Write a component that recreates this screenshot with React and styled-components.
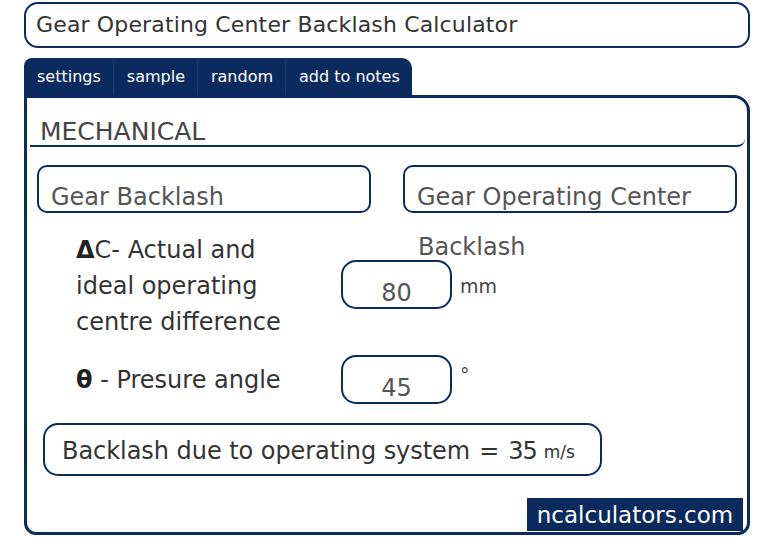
import styled, { createGlobalStyle } from 'styled-components';

const navy = '#0b2b5e';

const Global = createGlobalStyle`
    html, body {
        margin: 0;
        padding: 0;
        background: #fff;
        font-family: "DejaVu Sans", "Open Sans", sans-serif;
    }
`

const Page = styled.div`
    width: 726px;
    padding: 2px 20px 0 24px;
`

const TitleBox = styled.div`
    height: 46px;
    box-sizing: border-box;
    border: 2px solid ${navy};
    border-radius: 14px;
    display: flex;
    align-items: center;
    padding: 0 0 1px 10px;
    font-size: 22px;
    letter-spacing: 0.15px;
    color: #333;
`

const Tabs = styled.div`
    margin-top: 10px;
    display: flex;
    width: fit-content;
    height: 37px;
    background: ${navy};
    border-radius: 8px 10px 0 0;
`

const Tab = styled.div`
    display: flex;
    align-items: center;
    padding: 0 12px 0 13px;
    color: #fff;
    font-size: 16px;
    border-left: ${p => p.first ? 'none' : '1px solid #1d3d70'};
`

const Panel = styled.div`
    height: 440px;
    box-sizing: border-box;
    border: 3px solid ${navy};
    border-radius: 0 16px 12px 12px;
    padding: 20px 0 0 0;
    display: flex;
    flex-direction: column;
`

const Section = styled.div`
    margin: 0 2px 0 3px;
    padding-left: 10px;
    line-height: 27px;
    border-bottom: 2px solid ${navy};
    border-bottom-right-radius: 8px;
    font-size: 25px;
    color: #444;
`

const Boxes = styled.div`
    display: flex;
    gap: 32px;
    margin: 18px 0 0 10px;
`

const CalcBox = styled.div`
    width: 334px;
    height: 48px;
    border: 2px solid ${navy};
    border-radius: 10px;
    display: flex;
    align-items: flex-end;
    padding-left: 12px;
    box-sizing: border-box;
    font-size: 24px;
    line-height: 28px;
    color: #555;
`

const Row = styled.div`
    display: grid;
    grid-template-columns: 265px 110px auto;
    grid-template-rows: ${p => p.rows || 'auto'};
    align-items: center;
    margin-top: ${p => p.gap};
    padding-left: 49px;
`

const Label = styled.div`
    font-size: 24px;
    line-height: 36px;
    color: #333;
    grid-row: ${p => p.span ? '1 / 3' : 'auto'};
    b { color: #222; }
`

const Caption = styled.div`
    grid-column: 2 / 4;
    grid-row: 1;
    align-self: start;
    padding-left: 77px;
    margin-top: 3px;
    font-size: 24px;
    line-height: 24px;
    color: #555;
`

const Input = styled.div`
    width: 111px;
    height: 49px;
    box-sizing: border-box;
    border: 2px solid ${navy};
    border-radius: 15px;
    display: flex;
    justify-content: center;
    align-items: flex-end;
    font-size: 24px;
    line-height: 27px;
    color: #555;
    grid-column: 2;
    grid-row: ${p => p.row || 'auto'};
    align-self: ${p => p.top ? 'start' : 'center'};
    margin-top: ${p => p.top ? '1px' : '0'};
`

const Unit = styled.div`
    grid-column: 3;
    grid-row: ${p => p.row || 'auto'};
    align-self: start;
    padding-left: 9px;
    font-size: 19px;
    line-height: 20px;
    color: #444;
    margin-top: ${p => p.offset};
`

const Result = styled.div`
    margin: 19px 0 0 16px;
    width: 559px;
    height: 53px;
    box-sizing: border-box;
    border: 2px solid ${navy};
    border-radius: 15px;
    display: flex;
    align-items: center;
    padding: 2px 0 0 17px;
    font-size: 24px;
    letter-spacing: -0.05px;
    color: #333;
`

const Eq = styled.span`
    margin: 0 9px 0 9px;
`

const Value = styled.span`
    letter-spacing: -1px;
`

const Small = styled.span`
    font-size: 17px;
    margin-left: 7px;
    padding-top: 3px;
`

const Brand = styled.div`
    margin: 22px 4px 0 auto;
    width: 216px;
    height: 33px;
    background: ${navy};
    color: #fff;
    font-size: 23px;
    display: flex;
    align-items: center;
    justify-content: center;
`

export default function App() {
    return (
        <Page>
            <Global />
            <TitleBox>Gear Operating Center Backlash Calculator</TitleBox>
            <Tabs>
                <Tab first>settings</Tab>
                <Tab>sample</Tab>
                <Tab>random</Tab>
                <Tab>add to notes</Tab>
            </Tabs>
            <Panel>
                <Section>MECHANICAL</Section>
                <Boxes>
                    <CalcBox>Gear Backlash</CalcBox>
                    <CalcBox>Gear Operating Center</CalcBox>
                </Boxes>
                <Row gap="19px" rows="27px auto">
                    <Label span><b>Δ</b>C- Actual and<br />ideal operating<br />centre difference</Label>
                    <Caption>Backlash</Caption>
                    <Input top row={2}>80</Input>
                    <Unit row={2} offset="17px">mm</Unit>
                </Row>
                <Row gap="15px">
                    <Label><b>θ</b> - Presure angle</Label>
                    <Input>45</Input>
                    <Unit offset="10px">°</Unit>
                </Row>
                <Result>Backlash due to operating system<Eq>=</Eq><Value>35</Value><Small>m/s</Small></Result>
                <Brand>ncalculators.com</Brand>
            </Panel>
        </Page>
    );
}
